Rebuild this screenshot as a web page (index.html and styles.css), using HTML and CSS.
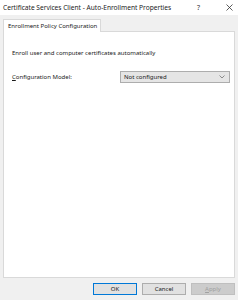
FILE: index.html
```html
<!DOCTYPE html>
<html lang="en">
<head>
    <meta charset="UTF-8">
    <title>Certificate Services Client - Auto-Enrollment Properties</title>
    <link rel="stylesheet" href="styles.css">
</head>
<body>
    <div class="titlebar">
        <span class="title">Certificate Services Client - Auto-Enrollment Properties</span>
        <span class="help">?</span>
        <span class="close">
            <svg width="7" height="7" viewBox="0 0 7 7"><path d="M0.5 0.5L6.5 6.5M6.5 0.5L0.5 6.5" stroke="#333" stroke-width="0.8" fill="none"/></svg>
        </span>
    </div>
    <div class="tabs">
        <div class="tab">Enrollment Policy Configuration</div>
    </div>
    <div class="panel">
        <p class="intro">Enroll user and computer certificates automatically</p>
        <div class="row">
            <label for="model"><u>C</u>onfiguration Model:</label>
            <div class="select" id="model">
                <span>Not configured</span>
                <svg width="6" height="4" viewBox="0 0 6 4"><path d="M0.5 0.5L3 3L5.5 0.5" stroke="#666" stroke-width="0.7" fill="none"/></svg>
            </div>
        </div>
    </div>
    <div class="buttons">
        <button class="default">OK</button>
        <button>Cancel</button>
        <button disabled><u>A</u>pply</button>
    </div>
</body>
</html>
```

FILE: styles.css
```css
body {
    margin: 0;
    width: 238px;
    height: 300px;
    background-color: #f0f0f0;
    font-family: "Noto Sans", "Liberation Sans", sans-serif;
    font-size: 6px;
    color: #1a1a1a;
    overflow: hidden;
}
.titlebar {
    height: 15px;
    background-color: white;
    display: flex;
    align-items: center;
    padding-left: 3px;
}
.title {
    flex: 1;
    font-size: 6.6px;
    white-space: nowrap;
}
.help {
    width: 10px;
    margin-right: 19px;
    font-size: 7px;
    color: #333;
}
.close {
    display: flex;
    width: 12px;
}
.tabs {
    display: flex;
    padding-left: 3px;
    margin-top: 4px;
}
.tab {
    width: 98px;
    height: 13px;
    box-sizing: border-box;
    padding-left: 4px;
    line-height: 12px;
    white-space: nowrap;
    background-color: white;
    border: 1px solid #d9d9d9;
    border-bottom: none;
    margin-bottom: -1px;
    position: relative;
}
.panel {
    margin: 0 3px;
    height: 247px;
    box-sizing: border-box;
    background-color: white;
    border: 1px solid #d9d9d9;
    padding: 17px 0 0 8px;
}
.intro {
    margin: 0 0 14px 0;
}
.row {
    display: flex;
    align-items: center;
}
.row label {
    width: 108px;
}
.select {
    width: 110px;
    height: 12px;
    flex-shrink: 0;
    box-sizing: border-box;
    background-color: #e5e5e5;
    border: 1px solid #adadad;
    display: flex;
    align-items: center;
    justify-content: space-between;
    padding: 0 4px 0 3px;
}
.buttons {
    display: flex;
    justify-content: flex-end;
    gap: 5px;
    padding-right: 3px;
    margin-top: 5px;
}
button {
    width: 44px;
    height: 12px;
    box-sizing: border-box;
    padding: 0;
    font-family: inherit;
    font-size: 6px;
    color: #1a1a1a;
    background-color: #e1e1e1;
    border: 1px solid #adadad;
}
button.default {
    border-color: #0078d7;
}
button:disabled {
    color: #a0a0a0;
    background-color: #cccccc;
    border-color: #bfbfbf;
}
```
